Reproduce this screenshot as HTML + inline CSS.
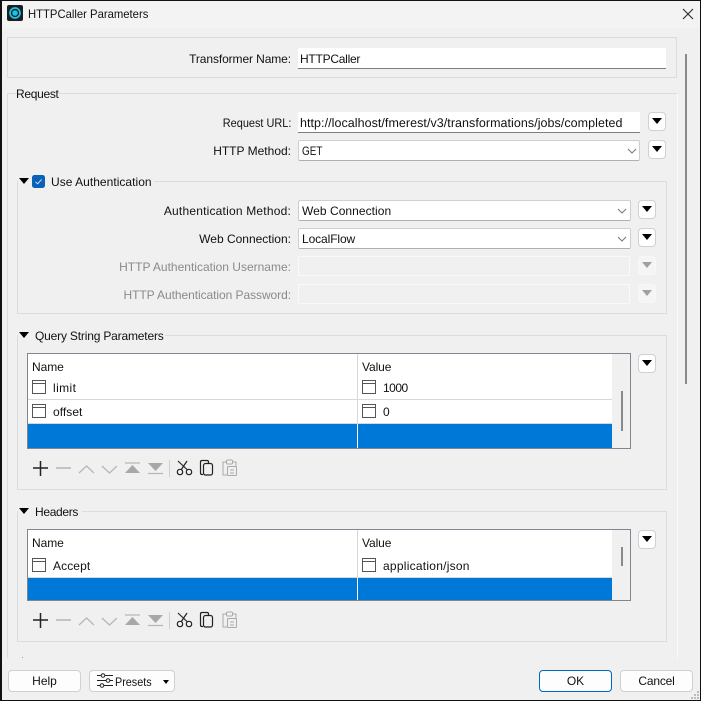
<!DOCTYPE html>
<html><head><meta charset="utf-8"><style>
html,body{margin:0;padding:0;background:#f0f0f0}
#r{position:relative;width:701px;height:701px;overflow:hidden;background:#f0f0f0;font:12px "Liberation Sans",sans-serif;color:#111}
#r div,#r span,#r svg{position:absolute;box-sizing:border-box}
.t{white-space:nowrap;line-height:16px;height:16px;letter-spacing:0}
.l{right:410px;text-align:right}
.g{border:1px solid #dcdcdc}
.leg{background:#f0f0f0;height:16px}
.f{background:#fff;border-bottom:1px solid #7e7e7e}
.c{background:#fff;border:1px solid #cfcfcf;border-bottom-color:#b0b0b0;border-radius:2px}
.d{background:#f0f0f0;border:1px solid #fafafa;border-radius:2px}
.b{background:#fff;border:1px solid #d0d0d0;border-radius:4px;width:18px;height:19px}
.b i{position:absolute;left:3px;top:5px;width:0;height:0;border-left:5.5px solid transparent;border-right:5.5px solid transparent;border-top:6px solid #000;display:block}
.b.o{background:#f5f5f5;border-color:#f8f8f8}.b.o i{border-top-color:#a0a0a0}
.bt{background:#fdfdfd;border:1px solid #d0d0d0;border-radius:4px;height:22px;text-align:center;line-height:21px}
</style></head><body><div id="r">
<div style="left:0;top:0;width:701px;height:28px;background:#f3f3f3"></div>
<svg style="left:7px;top:5px" width="16" height="16" viewBox="0 0 16 16"><rect width="16" height="16" rx="2" fill="#1a1f22"/><circle cx="8" cy="8" r="5" fill="none" stroke="#19c4e6" stroke-width="1.7"/><circle cx="8" cy="8" r="2.8" fill="#19c4e6"/></svg>
<div class="t" style="left:28px;top:6px;transform-origin:0 50%;transform:scaleX(.94)">HTTPCaller Parameters</div>
<svg style="left:681px;top:7px" width="13" height="13" viewBox="0 0 13 13"><path d="M2 2L12 12M12 2L2 12" stroke="#222" stroke-width="1" fill="none"/></svg>

<div class="g" style="left:7px;top:37px;width:670px;height:41px"></div>
<div class="t l" style="top:51px;letter-spacing:-.1px">Transformer Name:</div>
<div class="f" style="left:298px;top:48px;width:368px;height:21px"></div>
<div class="t" style="left:300px;top:51px;letter-spacing:-.25px">HTTPCaller</div>
<div style="left:685px;top:54px;width:2px;height:330px;background:#8a8a8a"></div>

<div style="left:7px;top:93px;width:671px;height:565px;border:1px solid #dcdcdc;border-right-color:#fafafa;border-bottom:0"></div>
<div class="t leg" style="left:16px;top:86px;letter-spacing:-.3px">Request</div>
<div class="t l" style="top:115px;transform-origin:100% 50%;transform:scaleX(.91)">Request URL:</div>
<div class="f" style="left:298px;top:112px;width:342px;height:21px"></div>
<div class="t" style="left:300px;top:115px;font-size:12.5px;letter-spacing:.05px;text-rendering:geometricPrecision">http://localhost/fmerest/v3/transformations/jobs/completed</div>
<div class="b" style="left:648px;top:112px"><i></i></div>
<div class="t l" style="top:143px">HTTP Method:</div>
<div class="c" style="left:298px;top:140px;width:342px;height:21px"></div>
<div class="t" style="left:302px;top:143px;transform-origin:0 50%;transform:scaleX(.83)">GET</div>
<svg style="left:627px;top:148px" width="10" height="6"><path d="M1 1L5 5L9 1" stroke="#777" fill="none"/></svg>
<div class="b" style="left:648px;top:140px"><i></i></div>

<div class="g" style="left:17px;top:181px;width:650px;height:133px"></div>
<div class="leg" style="left:18px;top:174px;width:136px"></div>
<div style="left:19px;top:178px;width:0;height:0;border-left:5.5px solid transparent;border-right:5.5px solid transparent;border-top:6px solid #000"></div>
<svg style="left:32px;top:175px" width="13" height="13" viewBox="0 0 13 13"><rect width="13" height="13" rx="2.5" fill="#0a62b8"/><path d="M3.5 6.8L5.6 8.8L9.6 4.4" stroke="#cfe3f7" stroke-width="1" fill="none"/></svg>
<div class="t" style="left:51px;top:174px;letter-spacing:.03px">Use Authentication</div>
<div class="t l" style="top:203px;letter-spacing:.2px">Authentication Method:</div>
<div class="c" style="left:298px;top:200px;width:333px;height:21px"></div>
<div class="t" style="left:302px;top:203px;letter-spacing:.05px">Web Connection</div>
<svg style="left:617px;top:208px" width="10" height="6"><path d="M1 1L5 5L9 1" stroke="#777" fill="none"/></svg>
<div class="b" style="left:638px;top:200px"><i></i></div>
<div class="t l" style="top:231px">Web Connection:</div>
<div class="c" style="left:298px;top:228px;width:333px;height:21px"></div>
<div class="t" style="left:302px;top:231px;letter-spacing:-.1px">LocalFlow</div>
<svg style="left:617px;top:236px" width="10" height="6"><path d="M1 1L5 5L9 1" stroke="#777" fill="none"/></svg>
<div class="b" style="left:638px;top:228px"><i></i></div>
<div class="t l" style="top:259px;color:#8a8a8a">HTTP Authentication Username:</div>
<div class="d" style="left:298px;top:256px;width:332px;height:20px"></div>
<div class="b o" style="left:638px;top:256px"><i></i></div>
<div class="t l" style="top:287px;color:#8a8a8a;letter-spacing:-.06px">HTTP Authentication Password:</div>
<div class="d" style="left:298px;top:284px;width:332px;height:20px"></div>
<div class="b o" style="left:638px;top:284px"><i></i></div>

<div class="g" style="left:17px;top:335px;width:650px;height:155px"></div>
<div class="leg" style="left:18px;top:328px;width:147px"></div>
<div style="left:19px;top:332px;width:0;height:0;border-left:5.5px solid transparent;border-right:5.5px solid transparent;border-top:6px solid #000"></div>
<div class="t" style="left:35px;top:328px;letter-spacing:-.18px">Query String Parameters</div>
<div style="left:27px;top:353px;width:604px;height:96px;border:1px solid #80868f;background:#f0f0f0"></div>
<div style="left:28px;top:354px;width:584px;height:94px;background:#fff"></div>
<div style="left:28px;top:399px;width:584px;height:1px;background:#d8d8d8"></div>
<div style="left:28px;top:423px;width:584px;height:1px;background:#d8d8d8"></div>
<div style="left:28px;top:424px;width:584px;height:24px;background:#0078d7"></div>
<div style="left:357px;top:354px;width:1px;height:94px;background:#d8d8d8"></div>
<div style="left:357px;top:424px;width:1px;height:24px;background:#fff"></div>
<div class="t" style="left:32px;top:359px;letter-spacing:-.05px">Name</div><div class="t" style="left:362px;top:359px;letter-spacing:-.1px">Value</div>
<div class="t" style="left:53px;top:380px;letter-spacing:.4px">limit</div><div class="t" style="left:383px;top:380px;letter-spacing:-.5px">1000</div>
<div class="t" style="left:53px;top:404px;letter-spacing:.05px">offset</div><div class="t" style="left:383px;top:404px">0</div>
<svg style="left:32px;top:380px" width="14" height="14"><rect x=".5" y=".5" width="13" height="13" fill="#fff" stroke="#555"/><path d="M1 3.5H13" stroke="#555"/></svg>
<svg style="left:32px;top:404px" width="14" height="14"><rect x=".5" y=".5" width="13" height="13" fill="#fff" stroke="#555"/><path d="M1 3.5H13" stroke="#555"/></svg>
<svg style="left:362px;top:380px" width="14" height="14"><rect x=".5" y=".5" width="13" height="13" fill="#fff" stroke="#555"/><path d="M1 3.5H13" stroke="#555"/></svg>
<svg style="left:362px;top:404px" width="14" height="14"><rect x=".5" y=".5" width="13" height="13" fill="#fff" stroke="#555"/><path d="M1 3.5H13" stroke="#555"/></svg>
<div style="left:621px;top:391px;width:2px;height:40px;background:#8a8a8a"></div>
<div class="b" style="left:638px;top:354px"><i></i></div>
<svg style="left:30px;top:456px" width="210" height="24" viewBox="0 0 210 24" fill="none"><path d="M3 12H18M10.5 5V20" stroke="#222" stroke-width="1.5"/><path d="M26 12H41" stroke="#b5b5b5" stroke-width="1.5"/><path d="M49 17L56.500 10L64 17M72 10L79.500 17L87 10" stroke="#b5b5b5" stroke-width="1.2"/><path d="M95 7H110" stroke="#b5b5b5" stroke-width="1.2"/><path d="M95 17L102.500 9L110 17Z" fill="#a8a8a8"/><path d="M118 7L125.500 15L133 7Z" fill="#a8a8a8"/><path d="M118 17.500H133" stroke="#b5b5b5" stroke-width="1.2"/><path d="M139.500 4V21" stroke="#d0d0d0"/><path d="M148 5L157.500 14M157 5L151 14" stroke="#222" stroke-width="1.2"/><circle cx="150" cy="16" r="2.700" stroke="#222" stroke-width="1.2"/><circle cx="159" cy="16" r="2.700" stroke="#222" stroke-width="1.2"/><path d="M173 18.500H172C171 18.500 170.500 18 170.500 17V6C170.500 5 171 4.500 172 4.500H177C178 4.500 178.500 5 178.500 6V7" stroke="#222" stroke-width="1.2"/><rect x="173.500" y="7.500" width="9" height="11.500" rx="2" stroke="#222" stroke-width="1.2"/><path d="M196 6H193V19H197M203 6H206V10" stroke="#aaa"/><rect x="196.500" y="4" width="6" height="4" rx="1" stroke="#aaa"/><rect x="197.500" y="10.500" width="9" height="9" rx="1" stroke="#aaa"/><path d="M200 14H204M200 17H204" stroke="#aaa"/></svg>

<div class="g" style="left:17px;top:511px;width:650px;height:131px"></div>
<div class="leg" style="left:18px;top:504px;width:64px"></div>
<div style="left:19px;top:508px;width:0;height:0;border-left:5.5px solid transparent;border-right:5.5px solid transparent;border-top:6px solid #000"></div>
<div class="t" style="left:35px;top:504px;letter-spacing:-.32px">Headers</div>
<div style="left:27px;top:529px;width:604px;height:72px;border:1px solid #80868f;background:#f0f0f0"></div>
<div style="left:28px;top:530px;width:584px;height:70px;background:#fff"></div>
<div style="left:28px;top:577px;width:584px;height:1px;background:#d8d8d8"></div>
<div style="left:28px;top:578px;width:584px;height:22px;background:#0078d7"></div>
<div style="left:357px;top:530px;width:1px;height:70px;background:#d8d8d8"></div>
<div style="left:357px;top:578px;width:1px;height:22px;background:#fff"></div>
<div class="t" style="left:32px;top:535px;letter-spacing:-.05px">Name</div><div class="t" style="left:362px;top:535px;letter-spacing:-.1px">Value</div>
<div class="t" style="left:53px;top:558px;letter-spacing:.1px">Accept</div><div class="t" style="left:383px;top:558px;letter-spacing:.25px">application/json</div>
<svg style="left:32px;top:558px" width="14" height="14"><rect x=".5" y=".5" width="13" height="13" fill="#fff" stroke="#555"/><path d="M1 3.5H13" stroke="#555"/></svg>
<svg style="left:362px;top:558px" width="14" height="14"><rect x=".5" y=".5" width="13" height="13" fill="#fff" stroke="#555"/><path d="M1 3.5H13" stroke="#555"/></svg>
<div style="left:621px;top:547px;width:2px;height:19px;background:#8a8a8a"></div>
<div class="b" style="left:638px;top:530px"><i></i></div>
<svg style="left:30px;top:608px" width="210" height="24" viewBox="0 0 210 24" fill="none"><path d="M3 12H18M10.5 5V20" stroke="#222" stroke-width="1.5"/><path d="M26 12H41" stroke="#b5b5b5" stroke-width="1.5"/><path d="M49 17L56.500 10L64 17M72 10L79.500 17L87 10" stroke="#b5b5b5" stroke-width="1.2"/><path d="M95 7H110" stroke="#b5b5b5" stroke-width="1.2"/><path d="M95 17L102.500 9L110 17Z" fill="#a8a8a8"/><path d="M118 7L125.500 15L133 7Z" fill="#a8a8a8"/><path d="M118 17.500H133" stroke="#b5b5b5" stroke-width="1.2"/><path d="M139.500 4V21" stroke="#d0d0d0"/><path d="M148 5L157.500 14M157 5L151 14" stroke="#222" stroke-width="1.2"/><circle cx="150" cy="16" r="2.700" stroke="#222" stroke-width="1.2"/><circle cx="159" cy="16" r="2.700" stroke="#222" stroke-width="1.2"/><path d="M173 18.500H172C171 18.500 170.500 18 170.500 17V6C170.500 5 171 4.500 172 4.500H177C178 4.500 178.500 5 178.500 6V7" stroke="#222" stroke-width="1.2"/><rect x="173.500" y="7.500" width="9" height="11.500" rx="2" stroke="#222" stroke-width="1.2"/><path d="M196 6H193V19H197M203 6H206V10" stroke="#aaa"/><rect x="196.500" y="4" width="6" height="4" rx="1" stroke="#aaa"/><rect x="197.500" y="10.500" width="9" height="9" rx="1" stroke="#aaa"/><path d="M200 14H204M200 17H204" stroke="#aaa"/></svg>

<div style="left:0;top:658px;width:701px;height:43px;background:#f0f0f0"></div>
<div style="left:22px;top:657px;width:1px;height:1px;background:#999"></div>
<div class="bt" style="left:8px;top:670px;width:73px">Help</div>
<div class="bt" style="left:89px;top:670px;width:86px"></div>
<svg style="left:97px;top:673px" width="18" height="15" viewBox="0 0 18 15" fill="none" stroke="#222"><path d="M0 2.500H4M8 2.500H16M0 7.500H9M13 7.500H16M0 12.500H3M7 12.500H16"/><circle cx="6" cy="2.500" r="1.800"/><circle cx="11" cy="7.500" r="1.800"/><circle cx="5" cy="12.500" r="1.800"/></svg>
<div class="t" style="left:115px;top:674px;transform-origin:0 50%;transform:scaleX(.9)">Presets</div>
<div style="left:163px;top:680px;width:0;height:0;border-left:3.5px solid transparent;border-right:3.5px solid transparent;border-top:4px solid #000"></div>
<div class="bt" style="left:539px;top:670px;width:73px;border-color:#0067c0">OK</div>
<div class="bt" style="left:620px;top:670px;width:73px;letter-spacing:-.2px">Cancel</div>
<svg style="left:691px;top:691px" width="9" height="9" fill="#bdbdbd"><rect x="6" y="0" width="2" height="2"/><rect x="3" y="3" width="2" height="2"/><rect x="6" y="3" width="2" height="2"/><rect x="0" y="6" width="2" height="2"/><rect x="3" y="6" width="2" height="2"/><rect x="6" y="6" width="2" height="2"/></svg>

<div style="left:0;top:0;width:701px;height:701px;border:1px solid #111;border-left-width:2px;border-right-width:1px;pointer-events:none"></div>
</div></body></html>
